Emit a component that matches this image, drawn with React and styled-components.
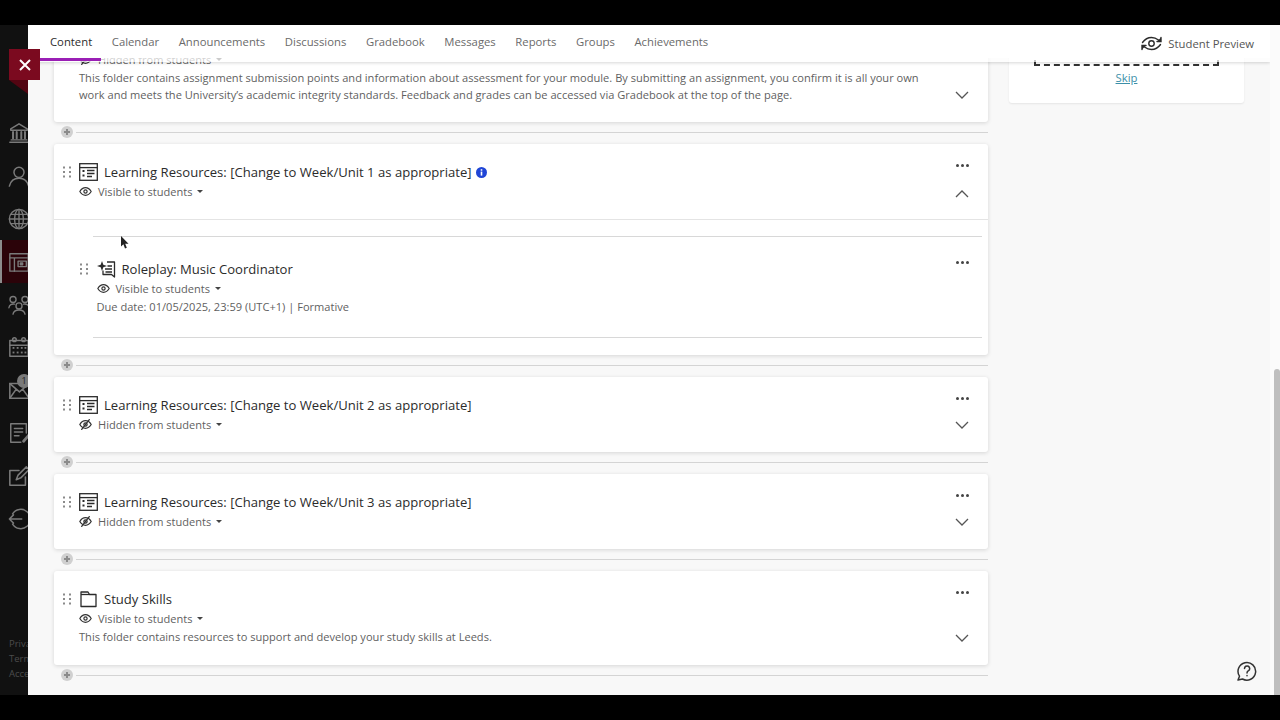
import React from "react";
import styled, { createGlobalStyle } from "styled-components";

const Global = createGlobalStyle`
  html, body { margin: 0; padding: 0; background: #000; }
  body { font-family: "Open Sans", "Liberation Sans", sans-serif; overflow: hidden; }
  * { box-sizing: border-box; }
`;

const Screen = styled.div`
  position: relative;
  width: 1280px;
  height: 720px;
  background: #000;
  padding: 25px 0;
  overflow: hidden;
`;
const Frame = styled.div`
  display: flex;
  height: 670px;
`;
const Sidebar = styled.aside`
  width: 28px;
  flex: none;
  background: #111;
  overflow: hidden;
  display: flex;
  flex-direction: column;
  padding-top: 87px;
`;
const RailItem = styled.div`
  flex: none;
  width: 28px;
  height: 42.8px;
  display: flex;
  align-items: center;
  padding-left: ${(p) => (p.$active ? "6px" : "8px")};
  color: #7a7a7a;
  background: ${(p) => (p.$active ? "#2b0309" : "transparent")};
  border-left: ${(p) => (p.$active ? "2px solid #8c8c8c" : "none")};
  svg { flex: none; }
`;
const RailFooter = styled.div`
  margin-top: auto;
  padding: 0 0 14px 9px;
  width: 80px;
  font-size: 9.5px;
  line-height: 15px;
  color: #4c4c4c;
`;
const Main = styled.div`
  position: relative;
  flex: 1;
  display: flex;
  min-width: 0;
  background: #f8f8f8;
`;
const Stage = styled.div`
  position: relative;
  width: 1242px;
  flex: none;
  overflow: hidden;
`;
const Track = styled.div`
  flex: 1;
  background: #fbfbfb;
  padding: 344px 0 0 4px;
`;
const Thumb = styled.div`
  height: 326px;
  background: #bfbfbf;
  border-radius: 3px 3px 0 0;
`;
const Nav = styled.nav`
  position: absolute;
  top: 0;
  left: 0;
  right: 0;
  height: 37px;
  z-index: 3;
  display: flex;
  align-items: flex-start;
  padding: 0 16px 0 22px;
  background: linear-gradient(#fff 33px, rgba(255, 255, 255, 0.72) 33px);
  box-shadow: 0 1px 3px rgba(0, 0, 0, 0.16);
`;
const Tabs = styled.div`
  display: flex;
  gap: 19.6px;
`;
const Tab = styled.div`
  position: relative;
  font-size: 11.3px;
  line-height: 34px;
  color: ${(p) => (p.$active ? "#2c2c2c" : "#6a6a6a")};
  font-weight: ${(p) => (p.$active ? 500 : 400)};
  ${(p) =>
    p.$active &&
    `&::after {
      content: "";
      position: absolute;
      left: -10px;
      right: -9px;
      top: 33px;
      height: 3px;
      background: #9a1fb5;
    }`}
`;
const PreviewLink = styled.div`
  margin-left: auto;
  display: flex;
  align-items: center;
  gap: 6px;
  height: 37px;
  font-size: 11.3px;
  color: #555;
`;
const Scroller = styled.div`
  display: flex;
  align-items: flex-start;
  padding-left: 26px;
`;
const Column = styled.div`
  width: 934px;
  flex: none;
`;
const Panel = styled.aside`
  width: 235px;
  flex: none;
  margin-left: 21px;
  background: #fff;
  border-radius: 0 0 3px 3px;
  box-shadow: 0 1px 2px rgba(0, 0, 0, 0.08);
  padding: 0 25px 16px;
  text-align: center;
`;
const DropBox = styled.div`
  height: 41px;
  border: 2px dashed #333;
  border-top: none;
`;
const SkipLink = styled.a`
  display: block;
  margin-top: 3px;
  font-size: 11.3px;
  line-height: 18px;
  color: #3c8fa8;
  text-decoration: underline;
`;
const Card = styled.section`
  background: #fff;
  border-radius: 3px;
  box-shadow: 0 1px 4px rgba(0, 0, 0, 0.14);
`;
const CardHead = styled.div`
  display: flex;
  padding-top: ${(p) => p.$top || 18}px;
  padding-bottom: ${(p) => p.$bottom || 0}px;
  border-bottom: ${(p) => (p.$split ? "1px solid #e4e4e4" : "none")};
  height: ${(p) => (p.$height ? `${p.$height}px` : "auto")};
`;
const HandleSlot = styled.div`
  width: 25px;
  flex: none;
  height: 20px;
  display: flex;
  align-items: center;
  justify-content: center;
  color: #8a8a8a;
`;
const Body = styled.div`
  flex: 1;
  min-width: 0;
`;
const TitleRow = styled.div`
  display: flex;
  align-items: center;
  gap: 6px;
  height: 20px;
  font-size: 13.08px;
  color: #2b2b2b;
  svg { flex: none; }
`;
const MetaRow = styled.div`
  display: flex;
  align-items: center;
  height: 20px;
  padding-bottom: 2px;
  font-size: 11.05px;
  color: #5f5f5f;
  svg { flex: none; margin-right: 6px; color: #333; }
`;
const Caret = styled.span`
  width: 0;
  height: 0;
  margin-left: 5px;
  margin-top: 1px;
  border-left: 3px solid transparent;
  border-right: 3px solid transparent;
  border-top: 3px solid #444;
`;
const Desc = styled.p`
  margin: -1px 0 1px;
  max-width: 850px;
  font-size: 11.08px;
  line-height: 17px;
  color: #5f5f5f;
`;
const Spacer = styled.div`
  height: 17px;
`;
const DueRow = styled.div`
  margin-top: -1px;
  font-size: 11.08px;
  line-height: 17px;
  color: #5f5f5f;
`;
const Actions = styled.div`
  width: 52px;
  flex: none;
  align-self: stretch;
  display: flex;
  flex-direction: column;
  align-items: center;
  justify-content: space-between;
  margin-top: -1px;
  padding-bottom: ${(p) => p.$bottom ?? 23}px;
  color: #555;
`;
const Dots = styled.div`
  display: flex;
  gap: 2px;
  height: 8px;
  align-items: center;
  span { width: 3px; height: 3px; border-radius: 50%; background: #444; }
`;
const Nested = styled.div`
  padding: 16px 6px 17px 39px;
`;
const NestedItem = styled.div`
  display: flex;
  height: 102px;
  padding: 22px 0 0 3px;
  border-top: 1px solid #d8d8d8;
  border-bottom: 1px solid #d8d8d8;
`;
const NestedHandle = styled(HandleSlot)`
  width: 16px;
  margin-left: -20px;
  margin-right: 4.5px;
`;
const NestedActions = styled.div`
  width: 40px;
  margin-top: -1px;
  display: flex;
  justify-content: center;
  align-self: flex-start;
`;
const InfoMark = styled.span`
  display: flex;
  margin-left: -2px;
`;
const Divider = styled.div`
  height: 22px;
  display: flex;
  align-items: center;
  gap: 3px;
  padding-bottom: 2px;
  padding-left: 7px;
  &::after { content: ""; flex: 1; height: 1px; background: #d4d4d4; }
`;
const Plus = styled.span`
  width: 12px;
  height: 12px;
  border-radius: 50%;
  background: #d0d0d0;
  position: relative;
  &::before, &::after {
    content: "";
    position: absolute;
    background: #8b8b8b;
  }
  &::before { left: 3px; right: 3px; top: 5.25px; height: 1.5px; }
  &::after { top: 3px; bottom: 3px; left: 5.25px; width: 1.5px; }
`;
const CloseRibbon = styled.div`
  position: absolute;
  left: 9px;
  top: 49px;
  width: 31px;
  height: 31px;
  z-index: 5;
  background: #7b0a1f;
  color: #fff;
  display: flex;
  align-items: center;
  justify-content: center;
  &::after {
    content: "";
    position: absolute;
    left: 0;
    top: 31px;
    width: 19px;
    height: 14px;
    background: #530512;
    clip-path: polygon(0 0, 100% 0, 100% 100%);
  }
`;
const HelpButton = styled.div`
  position: absolute;
  display: flex;
  left: 1236px;
  top: 660px;
  z-index: 4;
  color: #333;
`;
const Pointer = styled.div`
  position: absolute;
  display: flex;
  left: 121px;
  top: 236px;
  z-index: 4;
`;
const Badge = styled.span`
  position: absolute;
  left: 9px;
  top: -5px;
  width: 14px;
  height: 14px;
  border-radius: 50%;
  background: #7a7a7a;
  color: #222;
  font-size: 9px;
  line-height: 14px;
  text-align: center;
`;
const MailWrap = styled.span`
  position: relative;
  display: flex;
`;

const S = ({ w = 22, h = 22, vb = "0 0 24 24", sw = 1.7, children }) => (
  <svg width={w} height={h} viewBox={vb} fill="none" stroke="currentColor" strokeWidth={sw} strokeLinecap="round" strokeLinejoin="round">
    {children}
  </svg>
);

const Handle = () => (
  <svg width="8" height="12" viewBox="0 0 8 12" fill="currentColor">
    {[1, 7].map((x) => [1.5, 6, 10.5].map((y) => <rect key={`${x}${y}`} x={x - 1} y={y - 1} width="2" height="2" />))}
  </svg>
);
const Eye = () => (
  <S w={13} h={13} sw={2.2}>
    <path d="M1.5 12C4.5 7 8 5 12 5s7.5 2 10.5 7c-3 5-6.5 7-10.5 7s-7.5-2-10.5-7z" />
    <circle cx="12" cy="12" r="3" />
  </S>
);
const EyeOff = () => (
  <S w={13} h={13} sw={2.4}>
    <path d="M1.5 12C4.5 7 8 5 12 5s7.5 2 10.5 7c-3 5-6.5 7-10.5 7s-7.5-2-10.5-7z" />
    <circle cx="12" cy="12" r="3" />
    <path d="M19 3L5 21" />
  </S>
);
const Listing = () => (
  <svg width="19" height="18" viewBox="0 0 19 18" fill="none" stroke="#2b2b2b" strokeWidth="1.3">
    <rect x="0.7" y="0.7" width="17.6" height="16.6" />
    <path d="M0.7 4.6H18.3" />
    <path d="M8 7.5H15.5M8 10.5H15.5M8 13.5H13" />
    <rect x="3.5" y="7" width="2" height="2" fill="#2b2b2b" stroke="none" />
    <rect x="3.5" y="11.5" width="2" height="2" fill="#2b2b2b" stroke="none" />
  </svg>
);
const Folder = () => (
  <svg width="19" height="18" viewBox="0 0 19 18" fill="none" stroke="#2b2b2b" strokeWidth="1.3" strokeLinejoin="round">
    <path d="M2 16.5V2H9L10.5 4.5H17V16.5Z" />
    <path d="M2 4.5H10.5" />
  </svg>
);
const Roleplay = () => (
  <svg width="19" height="18" viewBox="0 0 19 18" fill="none" stroke="#2b2b2b" strokeWidth="1.3" strokeLinejoin="round">
    <path d="M10 2H17.5V17L14.5 14.500H6V10.500" />
    <path d="M10.500 6H15M8 9H15M8.500 12H15" />
    <path d="M5 1L6.300 4.700L10 6L6.300 7.300L5 11L3.700 7.300L0 6L3.700 4.700Z" fill="#2b2b2b" stroke="none" />
  </svg>
);
const Info = () => (
  <svg width="11" height="11" viewBox="0 0 11 11">
    <circle cx="5.5" cy="5.5" r="5.5" fill="#1f45d6" />
    <rect x="4.7" y="4.6" width="1.6" height="4" fill="#fff" />
    <rect x="4.7" y="2.2" width="1.6" height="1.5" fill="#fff" />
  </svg>
);
const ChevronDown = () => (
  <svg width="14" height="8" viewBox="0 0 14 8" fill="none" stroke="#555" strokeWidth="1.3"><path d="M1 1L7 7L13 1" /></svg>
);
const ChevronUp = () => (
  <svg width="14" height="8" viewBox="0 0 14 8" fill="none" stroke="#555" strokeWidth="1.3"><path d="M1 7L7 1L13 7" /></svg>
);
const More = () => (
  <Dots><span /><span /><span /></Dots>
);
const Bank = () => (
  <S sw={1.6}>
    <path d="M12 2L3 7.5V9H21V7.5Z" />
    <path d="M5.5 11V18M9.5 11V18M14.5 11V18M18.5 11V18" strokeWidth="2.2" />
    <path d="M3.5 19.5H20.5M2 22H22" />
  </S>
);
const Person = () => (
  <S sw={1.6}>
    <circle cx="12" cy="8" r="5.5" />
    <path d="M1.5 23C3 17 7 14.5 12 14.5S21 17 22.5 23" />
  </S>
);
const Globe = () => (
  <S sw={1.5}>
    <circle cx="12" cy="12" r="10.5" />
    <ellipse cx="12" cy="12" rx="4.8" ry="10.5" />
    <path d="M12 1.5V22.5M1.5 12H22.5M3 7H21M3 17H21" />
  </S>
);
const Course = () => (
  <S sw={1.5}>
    <rect x="2" y="3" width="20" height="19" />
    <path d="M2 7.5H22M7 7.5V22" />
    <rect x="11" y="11" width="9" height="6" />
    <rect x="13.5" y="13" width="2.5" height="2" fill="currentColor" />
  </S>
);
const People = () => (
  <S sw={1.5}>
    <circle cx="5.5" cy="6" r="3.3" />
    <circle cx="18.5" cy="6" r="3.3" />
    <circle cx="12" cy="13" r="3.3" />
    <path d="M1 15C1.5 11.5 4 10.5 7 11M23 15C22.5 11.5 20 10.5 17 11M5.5 22C6 18.5 9 17.5 12 17.5S18 18.5 18.5 22" />
  </S>
);
const Cal = () => (
  <S sw={1.6}>
    <rect x="2" y="5" width="20" height="17" />
    <path d="M2 10H22" />
    <circle cx="7" cy="4" r="2" />
    <circle cx="17" cy="4" r="2" />
    {[6, 10.5, 15, 19].map((x) => [13, 18].map((y) => <rect key={`${x}${y}`} x={x - 1} y={y - 1} width="2" height="2" fill="currentColor" stroke="none" />))}
  </S>
);
const Mail = () => (
  <MailWrap>
    <S sw={1.7}>
      <rect x="2" y="5" width="21" height="16" />
      <path d="M2 5L12.5 14L23 5M2 21L9 11M23 21L16 11" />
    </S>
    <Badge>1</Badge>
  </MailWrap>
);
const Grades = () => (
  <S sw={1.6}>
    <path d="M20 12V2H3V22H14" />
    <path d="M7 7H16M7 11H16M7 15H12" />
    <path d="M17 21L23 14" strokeWidth="3" />
  </S>
);
const Edit = () => (
  <S sw={1.7}>
    <path d="M19 13V22H2V6H12" />
    <path d="M9 16L11 11L20 2L23 5L14 14Z" />
  </S>
);
const SignOut = () => (
  <S sw={1.6}>
    <path d="M5 6.5A10.5 10.5 0 1 1 5 17.5" />
    <path d="M15 12H1.5M6 7.5L1.5 12L6 16.5" />
  </S>
);
const PreviewIcon = () => (
  <svg width="21" height="15" viewBox="0 0 21 15" fill="none" stroke="#2b2b2b" strokeWidth="1.4" strokeLinecap="round">
    <path d="M1.5 6.5C4 3 7 1.5 10.5 1.5C13.5 1.5 15.5 2.5 17.5 4" />
    <path d="M19.5 8.5C17 12 14 13.5 10.5 13.5C7.5 13.5 5.5 12.5 3.5 11" />
    <path d="M20 1.5V5.5H16" fill="#2b2b2b" />
    <path d="M1 13.5V9.5H5" fill="#2b2b2b" />
    <circle cx="10.5" cy="7.5" r="2.7" />
  </svg>
);
const Help = () => (
  <svg width="22" height="22" viewBox="0 0 22 22" fill="none" stroke="currentColor" strokeWidth="1.5" strokeLinecap="round" strokeLinejoin="round">
    <path d="M2 20L3.5 16.2A8.8 8.8 0 1 1 6.5 19Z" />
    <path d="M8.5 8.5A2.6 2.6 0 1 1 12.5 10.7C11.5 11.3 11 11.8 11 13" />
    <path d="M11 15.6V15.7" />
  </svg>
);

const tabs = ["Content", "Calendar", "Announcements", "Discussions", "Gradebook", "Messages", "Reports", "Groups", "Achievements"];
const rail = [Bank, Person, Globe, Course, People, Cal, Mail, Grades, Edit, SignOut];

const Meta = ({ hidden }) => (
  <MetaRow>
    {hidden ? <EyeOff /> : <Eye />}
    {hidden ? "Hidden from students" : "Visible to students"}
    <Caret />
  </MetaRow>
);
const Gap = () => (
  <Divider>
    <Plus />
  </Divider>
);
const Resource = ({ n }) => (
  <Card>
    <CardHead>
      <HandleSlot><Handle /></HandleSlot>
      <Body>
        <TitleRow><Listing />{`Learning Resources: [Change to Week/Unit ${n} as appropriate]`}</TitleRow>
        <Meta hidden />
        <Spacer />
      </Body>
      <Actions><More /><ChevronDown /></Actions>
    </CardHead>
  </Card>
);

export default function App() {
  return (
    <Screen>
      <Global />
      <Frame>
        <Sidebar>
          {rail.map((Icon, i) => (
            <RailItem key={i} $active={i === 3}><Icon /></RailItem>
          ))}
          <RailFooter>
            <div>Privacy</div>
            <div>Terms</div>
            <div>Accessibility</div>
          </RailFooter>
        </Sidebar>
        <Main>
          <Stage>
            <Nav>
              <Tabs>
                {tabs.map((t, i) => (
                  <Tab key={t} $active={i === 0}>{t}</Tab>
                ))}
              </Tabs>
              <PreviewLink><PreviewIcon />Student Preview</PreviewLink>
            </Nav>
            <Scroller>
              <Column>
                <Card>
                  <CardHead $top={25} $bottom={18}>
                    <HandleSlot />
                    <Body>
                      <Meta hidden />
                      <Desc>
                        This folder contains assignment submission points and information about assessment for your module. By submitting an assignment, you confirm it is all your own work and meets the University’s academic integrity standards. Feedback and grades can be accessed via Gradebook at the top of the page.
                      </Desc>
                    </Body>
                    <Actions $bottom={5}><span /><ChevronDown /></Actions>
                  </CardHead>
                </Card>
                <Gap />
                <Card>
                  <CardHead $split $height={76}>
                    <HandleSlot><Handle /></HandleSlot>
                    <Body>
                      <TitleRow>
                        <Listing />
                        Learning Resources: [Change to Week/Unit 1 as appropriate]
                        <InfoMark><Info /></InfoMark>
                      </TitleRow>
                      <Meta />
                    </Body>
                    <Actions $bottom={21}><More /><ChevronUp /></Actions>
                  </CardHead>
                  <Nested>
                    <NestedItem>
                      <NestedHandle><Handle /></NestedHandle>
                      <Body>
                        <TitleRow><Roleplay />Roleplay: Music Coordinator</TitleRow>
                        <Meta />
                        <DueRow>Due date: 01/05/2025, 23:59 (UTC+1) | Formative</DueRow>
                      </Body>
                      <NestedActions><More /></NestedActions>
                    </NestedItem>
                  </Nested>
                </Card>
                <Gap />
                <Resource n={2} />
                <Gap />
                <Resource n={3} />
                <Gap />
                <Card>
                  <CardHead $bottom={19}>
                    <HandleSlot><Handle /></HandleSlot>
                    <Body>
                      <TitleRow><Folder />Study Skills</TitleRow>
                      <Meta />
                      <Desc>This folder contains resources to support and develop your study skills at Leeds.</Desc>
                    </Body>
                    <Actions $bottom={4}><More /><ChevronDown /></Actions>
                  </CardHead>
                </Card>
                <Gap />
              </Column>
              <Panel>
                <DropBox />
                <SkipLink>Skip</SkipLink>
              </Panel>
            </Scroller>
          </Stage>
          <Track><Thumb /></Track>
        </Main>
      </Frame>
      <CloseRibbon>
        <svg width="12" height="12" viewBox="0 0 12 12" stroke="#fff" strokeWidth="2"><path d="M1 1L11 11M11 1L1 11" /></svg>
      </CloseRibbon>
      <HelpButton><Help /></HelpButton>
      <Pointer>
        <svg width="8" height="13" viewBox="0 0 8 13"><path d="M0 0V10.5L2.4 8.3L4 12.5L5.8 11.7L4.2 7.8H7.5Z" fill="#222" /></svg>
      </Pointer>
    </Screen>
  );
}
